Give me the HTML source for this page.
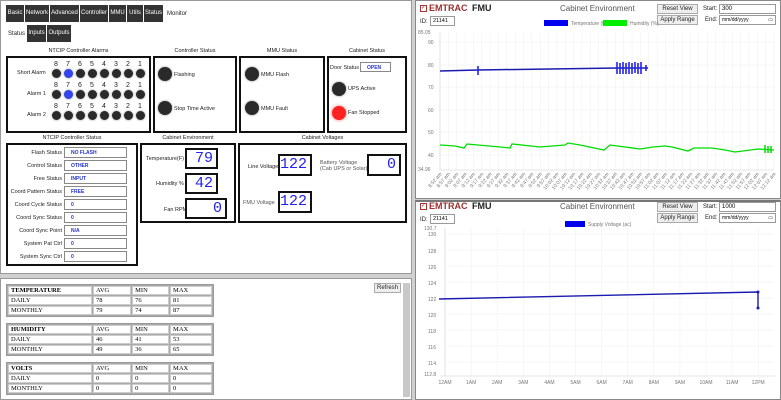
<!DOCTYPE html>
<html><head><meta charset="utf-8"><style>
*{box-sizing:border-box;margin:0;padding:0}
body{width:781px;height:400px;background:#d0d0d0;font-family:"Liberation Sans",sans-serif;position:relative;overflow:hidden}
.a{position:absolute}
.tab{position:absolute;background:#333;color:#fff;font-size:6px;height:17px;line-height:17px;text-align:center}
.ttl{position:absolute;font-size:5.5px;text-align:center;color:#222}
.box{position:absolute;border:2px solid #111;background:#fff}
.num{position:absolute;font-size:7px;color:#222;width:10px;text-align:center}
.dot{position:absolute;width:9px;height:9px;border-radius:50%;background:#2a2a2a;box-shadow:0 0 2px #888}
.big{position:absolute;width:14px;height:14px;border-radius:50%;background:#2a2a2a;box-shadow:0 0 2px #888}
.lbl{position:absolute;font-size:5.5px;color:#222}
.fld{position:absolute;border:1px solid #888;height:11px;font-size:5px;font-weight:bold;color:#2233cc;line-height:10px;padding-left:6px;background:#fff}
.lcd{position:absolute;border:2px solid #111;background:#fff;color:#2222ee;font-family:"Liberation Mono",monospace;font-size:15px;text-align:right;padding-right:3px;line-height:17px;overflow:hidden}
table{position:absolute;border-collapse:separate;border-spacing:1px;background:#aaa;font-family:"Liberation Serif",serif;font-size:6.5px;border:1px solid #999}
td{background:#fff;height:9px;padding:0 2px;line-height:7px;border:1px solid #ccc}
.btn{position:absolute;background:#eee;border:1px solid #aaa;font-size:6px;text-align:center;line-height:9px;height:10px;color:#222}
.inp{position:absolute;border:1px solid #999;background:#fff;font-size:6px;line-height:9px;height:10px;padding-left:2px}
.yl{font-size:5px;fill:#777;font-family:"Liberation Sans",sans-serif}
</style></head><body>
<div class="a" style="left:0;top:0;width:412px;height:274px;background:#fff;border:1px solid #999"></div>
<div class="tab" style="left:6px;top:5px;width:18px">Basic</div>
<div class="tab" style="left:25px;top:5px;width:24px">Network</div>
<div class="tab" style="left:50px;top:5px;width:29px">Advanced</div>
<div class="tab" style="left:80px;top:5px;width:28px">Controller</div>
<div class="tab" style="left:109px;top:5px;width:17px">MMU</div>
<div class="tab" style="left:127px;top:5px;width:16px">Utils</div>
<div class="tab" style="left:144px;top:5px;width:19px">Status</div>
<div class="lbl" style="left:167px;top:11px;font-size:6px">Monitor</div>
<div class="lbl" style="left:8px;top:31px;font-size:6px">Status</div>
<div class="tab" style="left:27px;top:25px;width:19px">Inputs</div>
<div class="tab" style="left:47px;top:25px;width:24px">Outputs</div>

<div class="ttl" style="left:6px;top:48px;width:145px">NTCIP Controller Alarms</div>
<div class="ttl" style="left:153px;top:48px;width:84px">Controller Status</div>
<div class="ttl" style="left:239px;top:48px;width:86px">MMU Status</div>
<div class="ttl" style="left:327px;top:48px;width:80px">Cabinet Status</div>
<div class="box" style="left:6px;top:56px;width:145px;height:77px"></div>
<div class="box" style="left:153px;top:56px;width:84px;height:77px"></div>
<div class="box" style="left:239px;top:56px;width:86px;height:77px"></div>
<div class="box" style="left:327px;top:56px;width:80px;height:77px"></div>
<div class="lbl" style="left:17px;top:70px">Short Alarm</div>
<div class="lbl" style="left:27px;top:91px">Alarm 1</div>
<div class="lbl" style="left:27px;top:112px">Alarm 2</div>
<div id="al"></div>
<script>
var xs=[52,64,76,88,100,112,124,136],ys=[68,89,110],h='';
ys.forEach(function(y,r){xs.forEach(function(x,i){h+='<div class="num" style="left:'+(x-1)+'px;top:'+(y-7)+'px">'+(8-i)+'</div><div class="dot" style="left:'+x+'px;top:'+(y+1)+'px;'+(i==1&&r<2?'background:#3344ee':'')+'"></div>';});});
document.getElementById('al').innerHTML=h;
</script>
<div class="big" style="left:158px;top:67px"></div><div class="lbl" style="left:174px;top:72px">Flashing</div>
<div class="big" style="left:158px;top:101px"></div><div class="lbl" style="left:174px;top:106px">Stop Time Active</div>
<div class="big" style="left:245px;top:67px"></div><div class="lbl" style="left:261px;top:72px">MMU Flash</div>
<div class="big" style="left:245px;top:101px"></div><div class="lbl" style="left:261px;top:106px">MMU Fault</div>
<div class="lbl" style="left:330px;top:65px">Door Status</div>
<div class="fld" style="left:360px;top:62px;width:31px;height:10px">OPEN</div>
<div class="big" style="left:332px;top:82px"></div><div class="lbl" style="left:348px;top:86px">UPS Active</div>
<div class="big" style="left:332px;top:106px;background:#f22;box-shadow:0 0 3px #f66"></div><div class="lbl" style="left:348px;top:110px">Fan Stopped</div>

<div class="ttl" style="left:6px;top:135px;width:132px">NTCIP Controller Status</div>
<div class="ttl" style="left:140px;top:135px;width:96px">Cabinet Environment</div>
<div class="ttl" style="left:238px;top:135px;width:169px">Cabinet Voltages</div>
<div class="box" style="left:6px;top:143px;width:132px;height:123px"></div>
<div class="box" style="left:140px;top:143px;width:96px;height:80px"></div>
<div class="box" style="left:238px;top:143px;width:169px;height:80px"></div>
<div id="st"></div>
<script>
var L=['Flash Status','Control Status','Free Status','Coord Pattern Status','Coord Cycle Status','Coord Sync Status','Coord Sync Point','System Pat Ctrl','System Sync Ctrl'],V=['NO FLASH','OTHER','INPUT','FREE','0','0','N/A','0','0'],s='';
L.forEach(function(l,i){var y=147+i*13;s+='<div class="lbl" style="left:10px;width:52px;text-align:right;top:'+(y+3)+'px">'+l+'</div><div class="fld" style="left:64px;top:'+y+'px;width:63px">'+V[i]+'</div>';});
document.getElementById('st').innerHTML=s;
</script>
<div class="lbl" style="left:146px;top:156px">Temperature(F)</div>
<div class="lcd" style="left:185px;top:148px;width:33px;height:21px">79</div>
<div class="lbl" style="left:156px;top:181px">Humidity %</div>
<div class="lcd" style="left:185px;top:173px;width:33px;height:21px">42</div>
<div class="lbl" style="left:164px;top:207px">Fan RPM</div>
<div class="lcd" style="left:185px;top:198px;width:42px;height:21px">0</div>
<div class="lbl" style="left:248px;top:164px">Line Voltage</div>
<div class="lcd" style="left:278px;top:154px;width:34px;height:22px">122</div>
<div class="lbl" style="left:320px;top:160px;color:#555">Battery Voltage<br>(Cab UPS or Solar)</div>
<div class="lcd" style="left:367px;top:154px;width:34px;height:22px">0</div>
<div class="lbl" style="left:243px;top:200px;color:#555">FMU Voltage</div>
<div class="lcd" style="left:278px;top:191px;width:34px;height:22px">122</div>

<div class="a" style="left:0;top:278px;width:412px;height:122px;background:#fff;border:1px solid #999"></div>
<div class="a" style="left:403px;top:283px;width:7px;height:114px;background:#c8c8c8"></div>
<div class="btn" style="left:374px;top:283px;width:27px">Refresh</div>
<table style="left:6px;top:284px;width:208px"><tr><td style="width:84px"><b>TEMPERATURE</b></td><td>AVG</td><td>MIN</td><td>MAX</td></tr><tr><td>DAILY</td><td>78</td><td>76</td><td>81</td></tr><tr><td>MONTHLY</td><td>79</td><td>74</td><td>87</td></tr></table>
<table style="left:6px;top:323px;width:208px"><tr><td style="width:84px"><b>HUMIDITY</b></td><td>AVG</td><td>MIN</td><td>MAX</td></tr><tr><td>DAILY</td><td>46</td><td>41</td><td>53</td></tr><tr><td>MONTHLY</td><td>49</td><td>36</td><td>65</td></tr></table>
<table style="left:6px;top:362px;width:208px"><tr><td style="width:84px"><b>VOLTS</b></td><td>AVG</td><td>MIN</td><td>MAX</td></tr><tr><td>DAILY</td><td>0</td><td>0</td><td>0</td></tr><tr><td>MONTHLY</td><td>0</td><td>0</td><td>0</td></tr></table>

<div class="a" style="left:415px;top:0;width:366px;height:199px;background:#fff;border:1px solid #888"></div>
<div class="a" style="left:415px;top:200px;width:366px;height:200px;background:#fff;border:1px solid #888;border-top:2px solid #777"></div>
<div id="hd"></div>
<script>
var hh='';[0,198].forEach(function(o,k){
hh+='<div class="a" style="left:420px;top:'+(5+o)+'px;width:7px;height:7px;border:1px solid #a33;font-size:6px;color:#a33;line-height:5px;text-align:center">✓</div>';
hh+='<div class="a" style="left:429px;top:'+(3+o)+'px;font-size:9px;font-weight:bold;color:#9a3030">EMTRAC <span style="color:#222;margin-left:2px">FMU</span></div>';
hh+='<div class="lbl" style="left:420px;top:'+(19+o)+'px;font-size:6px">ID:</div><div class="inp" style="left:430px;top:'+(16+o)+'px;width:25px;font-size:5.5px">21141</div>';
hh+='<div class="a" style="left:560px;top:'+(4+o)+'px;font-size:8px;color:#555">Cabinet Environment</div>';
hh+='<div class="btn" style="left:657px;top:'+(4+o)+'px;width:41px">Reset View</div><div class="btn" style="left:657px;top:'+(15+o)+'px;width:41px">Apply Range</div>';
hh+='<div class="lbl" style="left:703px;top:'+(6+o)+'px;font-size:6px">Start:</div><div class="inp" style="left:719px;top:'+(4+o)+'px;width:57px">'+(k?'1000':'300')+'</div>';
hh+='<div class="lbl" style="left:705px;top:'+(17+o)+'px;font-size:6px">End:</div><div class="inp" style="left:719px;top:'+(15+o)+'px;width:57px;font-size:5px">mm/dd/yyyy <span style="float:right;margin-right:2px">▭</span></div>';
});document.getElementById('hd').innerHTML=hh;
</script>
<svg class="a" style="left:0;top:0" width="781" height="400">
<rect x="544" y="20" width="24" height="6" fill="#0000ee"/><text x="571" y="25" class="yl">Temperature (f)</text>
<rect x="603" y="20" width="24" height="6" fill="#00ee00"/><text x="630" y="25" class="yl">Humidity (%)</text>
<g stroke="#eee" stroke-width="0.5" id="g1"></g>
<line x1="440" y1="33" x2="440" y2="170" stroke="#ccc" stroke-width="0.5"/>
<line x1="440" y1="170" x2="774" y2="170" stroke="#ccc" stroke-width="0.5"/>
<text x="418" y="34" class="yl">85.05</text><text x="428" y="44" class="yl">90</text><text x="428" y="67" class="yl">80</text><text x="428" y="89" class="yl">70</text><text x="428" y="112" class="yl">60</text><text x="428" y="134" class="yl">50</text><text x="428" y="157" class="yl">40</text><text x="418" y="171" class="yl">34.96</text>
<polyline points="440,71 478,70 618,68 648,68" fill="none" stroke="#1a1ab0" stroke-width="1.5"/>
<path d="M478,66v9M617,62v12M620,63v11M623,62v12M626,63v11M629,62v12M632,63v11M635,62v11M638,63v11M641,62v12M646,65v6" stroke="#2222ee" stroke-width="1.6"/>
<polyline points="440,145 455,146 464,148 467,144 500,147 510,148 512,144 540,147 565,145 568,143 580,145 604,150 610,145 640,149 653,147 665,146 672,147 688,151 694,148 712,148 725,150 735,152 758,149 774,150" fill="none" stroke="#00dd00" stroke-width="1.3"/>
<path d="M765,145v8M768,146v7M771,146v7" stroke="#00dd00" stroke-width="1.5"/>
<g id="xl" class="yl"></g>
<rect x="565" y="221" width="20" height="6" fill="#0000ee"/><text x="588" y="226" class="yl">Supply Voltage (ac)</text>
<g stroke="#eee" stroke-width="0.5" id="g2"></g>
<line x1="445" y1="228" x2="445" y2="376" stroke="#ccc" stroke-width="0.5"/>
<line x1="440" y1="376" x2="775" y2="376" stroke="#ccc" stroke-width="0.5"/>
<text x="424" y="230" class="yl">130.7</text><text x="428" y="236" class="yl">130</text><text x="428" y="253" class="yl">128</text><text x="428" y="269" class="yl">126</text><text x="428" y="285" class="yl">124</text><text x="428" y="301" class="yl">122</text><text x="428" y="317" class="yl">120</text><text x="428" y="333" class="yl">118</text><text x="428" y="349" class="yl">116</text><text x="428" y="365" class="yl">114</text><text x="424" y="376" class="yl">112.8</text>
<polyline points="439,299 758,292 758,308" fill="none" stroke="#1a1ab0" stroke-width="1.4"/>
<circle cx="758" cy="292" r="1.5" fill="#1a1ab0"/><circle cx="758" cy="308" r="1.5" fill="#1a1ab0"/>
<g id="xl2" class="yl"></g>
</svg>
<script>
var g='',x='',i;
for(i=0;i<41;i++){var px=440+i*8.35;g+='<line x1="'+px+'" y1="33" x2="'+px+'" y2="170"/>';var t=new Date(2020,0,1,8,52+i*5);var hr=t.getHours(),m=t.getMinutes();x+='<text transform="translate('+(px+2)+',174) rotate(-50)" text-anchor="end">'+hr+':'+(m<10?'0':'')+m+' am</text>';}
[42,65,87,110,132,155].forEach(function(y){g+='<line x1="440" y1="'+y+'" x2="774" y2="'+y+'"/>';});
document.getElementById('g1').innerHTML=g;document.getElementById('xl').innerHTML=x;
var g2='',x2='',n=['12AM','1AM','2AM','3AM','4AM','5AM','6AM','7AM','8AM','9AM','10AM','11AM','12PM'];
n.forEach(function(s,i){var px=445+i*26.1;g2+='<line x1="'+px+'" y1="228" x2="'+px+'" y2="376"/>';x2+='<text x="'+px+'" y="384" text-anchor="middle">'+s+'</text>';});
[234,250,266,282,298,314,330,346,362].forEach(function(y){g2+='<line x1="445" y1="'+y+'" x2="774" y2="'+y+'"/>';});
document.getElementById('g2').innerHTML=g2;document.getElementById('xl2').innerHTML=x2;
</script>
</body></html>
